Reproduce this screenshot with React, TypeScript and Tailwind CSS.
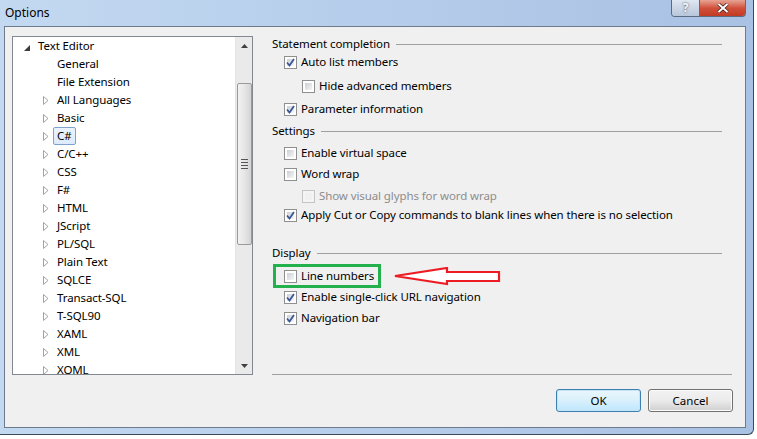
import React from "react";

const font = { fontFamily: '"Noto Sans", "Open Sans", sans-serif' };

type TreeItem = { label: string; expandable?: boolean; selected?: boolean; level: number };

const treeItems: TreeItem[] = [
  { label: "Text Editor", level: 0 },
  { label: "General", level: 1 },
  { label: "File Extension", level: 1 },
  { label: "All Languages", level: 1, expandable: true },
  { label: "Basic", level: 1, expandable: true },
  { label: "C#", level: 1, expandable: true, selected: true },
  { label: "C/C++", level: 1, expandable: true },
  { label: "CSS", level: 1, expandable: true },
  { label: "F#", level: 1, expandable: true },
  { label: "HTML", level: 1, expandable: true },
  { label: "JScript", level: 1, expandable: true },
  { label: "PL/SQL", level: 1, expandable: true },
  { label: "Plain Text", level: 1, expandable: true },
  { label: "SQLCE", level: 1, expandable: true },
  { label: "Transact-SQL", level: 1, expandable: true },
  { label: "T-SQL90", level: 1, expandable: true },
  { label: "XAML", level: 1, expandable: true },
  { label: "XML", level: 1, expandable: true },
  { label: "XOML", level: 1, expandable: true },
];

function Checkbox({ checked, disabled }: { checked?: boolean; disabled?: boolean }) {
  return (
    <div
      className={`w-[13px] h-[13px] shrink-0 border p-[2px] ${
        disabled ? "border-[#c4c4c4] bg-[#f4f4f4]" : "border-[#8e8f8f] bg-white"
      }`}
    >
      <div
        className={`w-full h-full relative ${
          disabled ? "bg-[#f0f0f0]" : "bg-gradient-to-br from-[#cbcfd5] to-[#f6f6f6]"
        }`}
      >
        {checked && (
          <svg viewBox="0 0 9 9" className="absolute left-[-1px] top-[-1px] w-[9px] h-[9px]">
            <path d="M1 4.5 L3.5 7.5 L8 1" fill="none" stroke="#3c5795" strokeWidth="1.8" />
          </svg>
        )}
      </div>
    </div>
  );
}

function Option({
  label,
  checked,
  disabled,
  indent,
  className = "",
}: {
  label: string;
  checked?: boolean;
  disabled?: boolean;
  indent?: boolean;
  className?: string;
}) {
  return (
    <div className={`h-[16px] flex items-center ${indent ? "pl-[30px]" : "pl-[12px]"} ${className}`}>
      <Checkbox checked={checked} disabled={disabled} />
      <span
        className={`ml-[4px] text-[11.5px] tracking-[-0.1px] leading-none ${
          disabled ? "text-[#8d8d8d]" : "text-black"
        }`}
      >
        {label}
      </span>
    </div>
  );
}

function GroupHeader({ title, className = "" }: { title: string; className?: string }) {
  return (
    <div className={`h-[16px] flex items-center pr-[10px] ${className}`}>
      <span className="text-[11.5px] tracking-[-0.1px] leading-none text-black">{title}</span>
      <div className="flex-1 ml-[6px] h-px bg-[#a0a0a0]" />
    </div>
  );
}

function Tree() {
  return (
    <div className="w-[241px] h-[339px] border border-[#828790] bg-white flex overflow-hidden">
      <div className="flex-1 overflow-hidden">
        {treeItems.map((item) => (
          <div key={item.label} className="h-[18px] flex items-center">
            {item.level === 0 ? (
              <>
                <svg viewBox="0 0 6 6" className="ml-[11px] w-[6px] h-[6px] mt-[3px]">
                  <path d="M6 0 L6 6 L0 6 Z" fill="#3c3c3c" />
                </svg>
                <span className="ml-[8px] text-[11.5px] tracking-[-0.1px] text-black leading-none">
                  {item.label}
                </span>
              </>
            ) : (
              <>
                <div className="w-[40px] flex justify-end pr-[4px] shrink-0">
                  {item.expandable && (
                    <svg viewBox="0 0 6 9" className="w-[6px] h-[9px]">
                      <path d="M0.5 0.5 L5 4.5 L0.5 8.5 Z" fill="white" stroke="#a2a2a2" strokeWidth="1" />
                    </svg>
                  )}
                </div>
                <span
                  className={`text-[11.5px] tracking-[-0.1px] text-black leading-none px-[3px] py-[2px] rounded-[2px] border ${
                    item.selected
                      ? "border-[#7da2ce] bg-gradient-to-b from-[#ebf4fd] to-[#dcebfc]"
                      : "border-transparent"
                  }`}
                >
                  {item.label}
                </span>
              </>
            )}
          </div>
        ))}
      </div>
      <div className="w-[17px] shrink-0 bg-[#eaeaea] border-l border-[#e4e4e4] flex flex-col items-center">
        <div className="h-[17px] flex items-center justify-center">
          <svg viewBox="0 0 7 4" className="w-[7px] h-[4px]">
            <path d="M0 4 L3.5 0 L7 4 Z" fill="#404040" />
          </svg>
        </div>
        <div className="mt-[29px] w-[15px] h-[162px] rounded-[2px] border border-[#9a9a9a] bg-gradient-to-r from-[#f2f2f2] via-[#e6e6e6] to-[#d4d4d4] flex flex-col items-center justify-center gap-[2px]">
          <div className="w-[7px] h-px bg-[#555]" />
          <div className="w-[7px] h-px bg-[#555]" />
          <div className="w-[7px] h-px bg-[#555]" />
          <div className="w-[7px] h-px bg-[#555]" />
        </div>
        <div className="flex-1" />
        <div className="h-[17px] flex items-center justify-center">
          <svg viewBox="0 0 7 4" className="w-[7px] h-[4px]">
            <path d="M0 0 L3.5 4 L7 0 Z" fill="#404040" />
          </svg>
        </div>
      </div>
    </div>
  );
}

function Button({ label, primary }: { label: string; primary?: boolean }) {
  return (
    <div
      className={`w-[85px] h-[23px] rounded-[3px] border flex items-center justify-center text-[11.5px] text-black ${
        primary
          ? "border-[#3c7fb1] bg-gradient-to-b from-[#eaf6fd] via-[#d9f0fc] to-[#bee6fd] shadow-[inset_0_0_0_1px_#c5e5f7]"
          : "border-[#707070] bg-gradient-to-b from-[#f2f2f2] via-[#ebebeb] to-[#cfcfcf] shadow-[inset_0_0_0_1px_#fcfcfc]"
      }`}
    >
      {label}
    </div>
  );
}

export default function App() {
  return (
    <div className="w-[757px] h-[439px] bg-white overflow-hidden" style={font}>
      <div className="w-[754px] h-[435px] bg-gradient-to-r from-[#c3d9f1] via-[#b6cdeb] to-[#a9c1e3] border-r border-b border-[#3d4a5a] rounded-br-[6px] flex flex-col">
        {/* title bar */}
        <div className="h-[26px] flex items-start shrink-0">
          <span className="ml-[5px] mt-[4px] text-[12px] text-black">Options</span>
          <div className="flex-1" />
          <div className="flex mr-[7px] h-[17px] border border-t-0 border-[#5c6b80] rounded-b-[4px] overflow-hidden">
            <div className="w-[28px] flex items-center justify-center bg-gradient-to-b from-[#dfe7f2] to-[#b8c6da] border-r border-[#5c6b80] text-[12px] font-bold text-[#f8f8f8] [text-shadow:0_0_2px_#333]">
              ?
            </div>
            <div className="w-[45px] flex items-center justify-center bg-gradient-to-b from-[#e7a394] via-[#d0503c] to-[#c23a23]">
              <svg viewBox="0 0 12 10" className="w-[12px] h-[10px]">
                <path d="M1.5 1 L10.5 9 M10.5 1 L1.5 9" stroke="#3a1b14" strokeWidth="3.4" />
                <path d="M1.5 1 L10.5 9 M10.5 1 L1.5 9" stroke="#ffffff" strokeWidth="2" />
              </svg>
            </div>
          </div>
        </div>

        {/* client area */}
        <div className="ml-[4px] w-[742px] h-[402px] border border-[#6d7b8c] bg-[#f0f0f0] flex flex-col">
          <div className="flex pt-[9px] pl-[7px]">
            <Tree />
            <div className="ml-[19px] w-[460px] h-[339px] flex flex-col">
              <GroupHeader title="Statement completion" />
              <Option label="Auto list members" checked className="mt-[2px]" />
              <Option label="Hide advanced members" indent className="mt-[8px]" />
              <Option label="Parameter information" checked className="mt-[7px]" />
              <GroupHeader title="Settings" className="mt-[6px]" />
              <Option label="Enable virtual space" className="mt-[6px]" />
              <Option label="Word wrap" className="mt-[5px]" />
              <Option label="Show visual glyphs for word wrap" indent disabled className="mt-[6px]" />
              <Option label="Apply Cut or Copy commands to blank lines when there is no selection" checked className="mt-[3px]" />
              <GroupHeader title="Display" className="mt-[22px]" />
              <div className="relative mt-[7px]">
                <Option label="Line numbers" />
                <div className="absolute left-[1px] top-[-4px] w-[108px] h-[24px] border-[3px] border-[#22b14c]" />
                <svg className="absolute left-[121px] top-[-1px] w-[108px] h-[20px]" viewBox="0 0 108 20">
                  <path
                    d="M2 9 L54 1 L54 5 L106 5 L106 14 L54 14 L54 17 Z"
                    fill="white"
                    stroke="#ed1c24"
                    strokeWidth="2.2"
                    strokeLinejoin="miter"
                  />
                </svg>
              </div>
              <Option label="Enable single-click URL navigation" checked className="mt-[5px]" />
              <Option label="Navigation bar" checked className="mt-[5px]" />
              <div className="flex-1" />
              <div className="h-px bg-[#a0a0a0]" />
            </div>
          </div>
          <div className="flex justify-end gap-[7px] pr-[12px] mt-[14px]">
            <Button label="OK" primary />
            <Button label="Cancel" />
          </div>
        </div>
      </div>
    </div>
  );
}
